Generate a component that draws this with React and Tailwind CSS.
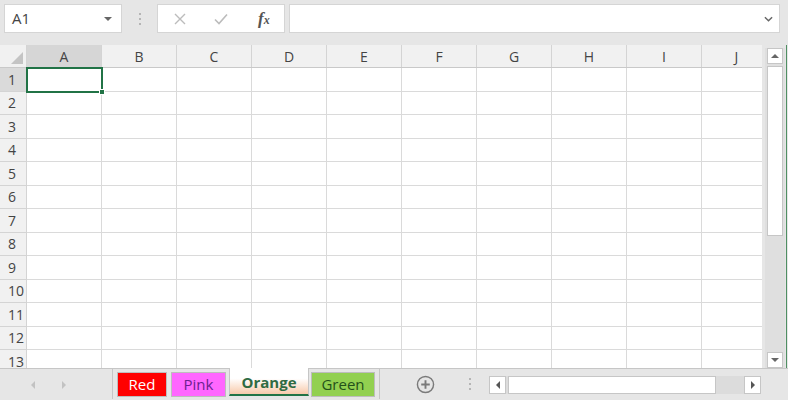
import React from "react"

const cols = ["A", "B", "C", "D", "E", "F", "G", "H", "I", "J"]
const rows = [1, 2, 3, 4, 5, 6, 7, 8, 9, 10, 11, 12, 13]

function Tri({ dir = "down", className = "" }) {
    const pts = {
        down: "0,0 8,0 4,4",
        up: "0,4 8,4 4,0",
        left: "4,0 4,8 0,4",
        right: "0,0 0,8 4,4",
    }[dir]
    const vb = dir === "up" || dir === "down" ? "0 0 8 4" : "0 0 4 8"
    return (
        <svg viewBox={vb} className={className} fill="currentColor">
            <polygon points={pts} />
        </svg>
    )
}

function Dots({ className = "" }) {
    return (
        <div className={`flex flex-col gap-[3px] ${className}`}>
            <span className="w-[2px] h-[2px] bg-[#b5b5b5]" />
            <span className="w-[2px] h-[2px] bg-[#b5b5b5]" />
            <span className="w-[2px] h-[2px] bg-[#b5b5b5]" />
        </div>
    )
}

function FormulaBar() {
    return (
        <div className="h-[45px] flex items-start pt-[4px] pl-[4px]">
            <div className="w-[118px] h-[29px] bg-white border border-[#d5d5d5] flex items-center justify-between pl-[7px] pr-[9px]">
                <span className="text-[15px] text-[#444]">A1</span>
                <Tri dir="down" className="w-[8px] h-[4px] text-[#666]" />
            </div>
            <Dots className="ml-[17px] mt-[9px]" />
            <div className="ml-[16px] w-[128px] h-[29px] bg-white border border-[#d5d5d5] flex items-center">
                <svg viewBox="0 0 12 12" className="w-[12px] h-[12px] ml-[16px]" stroke="#bcbcbc" strokeWidth="1.4" fill="none">
                    <path d="M1 1 L11 11 M11 1 L1 11" />
                </svg>
                <svg viewBox="0 0 14 12" className="w-[14px] h-[12px] ml-[28px]" stroke="#bcbcbc" strokeWidth="1.6" fill="none">
                    <path d="M1 6.5 L5 10.5 L13 1.5" />
                </svg>
                <span className="ml-[30px] text-[#555] italic font-bold leading-none" style={{ fontFamily: "'Liberation Serif', serif" }}>
                    <span className="text-[17px]">f</span>
                    <span className="text-[12px]">x</span>
                </span>
            </div>
            <div className="ml-[4px] w-[491px] h-[29px] bg-white border border-[#d5d5d5] flex items-center justify-end pr-[6px]">
                <svg viewBox="0 0 10 6" className="w-[9px] h-[6px]" stroke="#666" strokeWidth="1.6" fill="none">
                    <path d="M1 1 L5 5 L9 1" />
                </svg>
            </div>
        </div>
    )
}

function Sheet() {
    return (
        <div className="relative h-[323px] overflow-hidden flex">
            <div className="w-[762px] bg-white">
                <div className="flex h-[23px] bg-[#f1f1f1] border-b border-[#c9c9c9]">
                    <div className="w-[27px] border-r border-[#d4d4d4] flex items-end justify-end pr-[3px] pb-[3px]">
                        <svg viewBox="0 0 12 12" className="w-[12px] h-[12px]">
                            <polygon points="12,0 12,12 0,12" fill="#c4c4c4" />
                        </svg>
                    </div>
                    {cols.map((c, i) => (
                        <div
                            key={c}
                            className={`${i === 9 ? "w-[60px] pl-[9px]" : "w-[75px] border-r border-[#d4d4d4]"} ${i === 0 ? "bg-[#d6d6d6]" : ""} flex items-center justify-center text-[14px] text-[#444]`}
                        >
                            {c}
                        </div>
                    ))}
                </div>
                {rows.map((r) => (
                    <div key={r} className="flex h-[23.5px]">
                        <div className={`w-[27px] pl-[8px] border-r border-b border-[#d4d4d4] ${r === 1 ? "bg-[#dadada]" : "bg-[#f1f1f1]"} flex items-center text-[14px] text-[#444]`}>
                            {r}
                        </div>
                        {cols.map((c, i) => (
                            <div
                                key={c}
                                className={`${i === 9 ? "w-[60px]" : "w-[75px] border-r"} border-b border-[#dadada]`}
                            />
                        ))}
                    </div>
                ))}
            </div>
            <div className="flex-1 bg-[#e6e6e6] flex">
                <div className="w-[20px] ml-[3px] mt-[3px] flex flex-col items-center bg-[#dfdfdf]">
                    <div className="w-[16px] h-[16px] bg-white border border-[#c6c6c6] flex items-center justify-center">
                        <Tri dir="up" className="w-[8px] h-[4px] text-[#666]" />
                    </div>
                    <div className="w-[16px] h-[170px] mt-[2px] bg-white border border-[#c6c6c6]" />
                    <div className="flex-1" />
                    <div className="w-[16px] h-[16px] bg-white border border-[#c6c6c6] flex items-center justify-center">
                        <Tri dir="down" className="w-[8px] h-[4px] text-[#666]" />
                    </div>
                </div>
                <div className="w-[1px] ml-[1px] bg-[#4f8f63]" />
            </div>
            <div className="absolute left-[26px] top-[22px] w-[77px] h-[26px] border-2 border-[#217346]">
                <div className="absolute -right-[4px] -bottom-[4px] w-[6px] h-[6px] bg-[#217346] border border-white" />
            </div>
        </div>
    )
}

function Tab({ label, className, active }) {
    return (
        <div className={`h-[25px] flex items-center justify-center text-[15px] ${active ? "font-bold" : ""} ${className}`}>
            {label}
        </div>
    )
}

function BottomBar() {
    return (
        <div className="h-[32px] border-t border-[#c6c6c6] flex items-start">
            <div className="w-[112px] h-full flex items-center pl-[31px] gap-[27px] text-[#c2c2c2]">
                <Tri dir="left" className="w-[4px] h-[8px]" />
                <Tri dir="right" className="w-[4px] h-[8px]" />
            </div>
            <div className="flex items-start gap-[2px]">
                <div className="pt-[3px] pl-[4px] pr-[2px] border-l border-[#c6c6c6] h-[30px]">
                    <Tab label="Red" className="w-[50px] bg-[#ff0000] text-white border border-[#bdbdbd]" />
                </div>
                <div className="pt-[3px] pr-[1px] h-[30px]">
                    <Tab label="Pink" className="w-[55px] bg-[#ff66ff] text-[#6b1f8f] border border-[#bdbdbd]" />
                </div>
                <div className="w-[80px] h-[28px] -mt-[1px] pt-[2px] bg-gradient-to-b from-white from-40% to-[#f7c9aa] border-x border-[#c6c6c6] border-b-2 border-b-[#217346] flex items-center justify-center text-[15px] font-bold text-[#2f6b43]">
                    Orange
                </div>
                <div className="pt-[3px] pr-[4px] border-r border-[#c6c6c6] h-[30px]">
                    <Tab label="Green" className="w-[64px] bg-[#92d050] text-[#24501a] border border-[#bdbdbd]" />
                </div>
            </div>
            <div className="ml-[36px] h-full flex items-center">
                <svg viewBox="0 0 20 20" className="w-[19px] h-[19px]" fill="none" stroke="#7a7a7a" strokeWidth="1.5">
                    <circle cx="10" cy="10" r="8.5" />
                    <path d="M10 5.5 V14.5 M5.5 10 H14.5" strokeWidth="2" />
                </svg>
            </div>
            <Dots className="ml-[34px] mt-[9px]" />
            <div className="ml-[18px] mt-[7px] w-[272px] h-[18px] bg-[#dcdcdc] flex items-center">
                <div className="w-[17px] h-[18px] bg-white border border-[#c6c6c6] flex items-center justify-center">
                    <Tri dir="left" className="w-[4px] h-[8px] text-[#555]" />
                </div>
                <div className="ml-[2px] w-[208px] h-[18px] bg-white border border-[#c6c6c6]" />
                <div className="flex-1" />
                <div className="w-[17px] h-[18px] bg-white border border-[#c6c6c6] flex items-center justify-center">
                    <Tri dir="right" className="w-[4px] h-[8px] text-[#555]" />
                </div>
            </div>
        </div>
    )
}

export default function App() {
    return (
        <div className="w-[788px] h-[400px] bg-[#e6e6e6] overflow-hidden flex flex-col" style={{ fontFamily: "'Open Sans', 'Noto Sans', sans-serif" }}>
            <FormulaBar />
            <Sheet />
            <BottomBar />
        </div>
    )
}
